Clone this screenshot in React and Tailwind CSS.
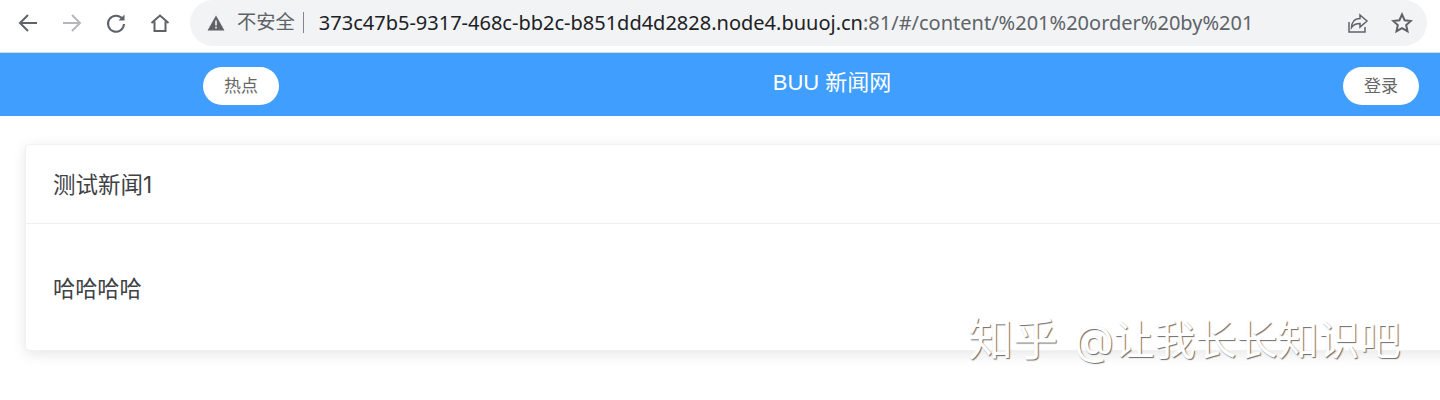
import React from "react";

const cjk = "font-['Inter','Noto_Sans_CJK_SC',sans-serif]";

function Nav() {
  return (
    <div className="flex items-center pl-[17px] shrink-0">
      <svg width="22" height="22" viewBox="0 0 22 22" fill="none" stroke="#5f6368" strokeWidth="2"><path d="M20 11H3M11 3l-8 8 8 8" /></svg>
      <svg className="ml-[22px]" width="22" height="22" viewBox="0 0 22 22" fill="none" stroke="#b5b7ba" strokeWidth="2"><path d="M2 11h17M11 3l8 8-8 8" /></svg>
      <svg className="ml-[22px]" width="22" height="22" viewBox="0 0 22 22" fill="none" stroke="#5f6368" strokeWidth="2"><path d="M17.500 7A8 8 0 1 0 19 12" /><path d="M19.500 2.500v6h-6z" fill="#5f6368" stroke="none" /></svg>
      <svg className="ml-[22px]" width="22" height="22" viewBox="0 0 22 22" fill="none" stroke="#5f6368" strokeWidth="2"><path d="M2.500 11 11 3.500l8.500 7.500M5.500 9.500V19h11V9.500" /></svg>
    </div>
  );
}

export default function App() {
  return (
    <div className="relative h-[400px] w-[1440px] overflow-hidden bg-white font-['Liberation_Sans','Noto_Sans_CJK_SC',sans-serif]">
      <div className="flex h-[53px] items-center border-b border-[#d5d7da] pb-[7px]">
        <Nav />
        <div className="ml-[19px] flex h-[46px] w-[1237px] items-center rounded-full bg-[#f1f3f4] pl-[17px] pr-[14px]">
          <svg width="18" height="18" viewBox="0 0 18 18" className="shrink-0"><path d="M9 1.500 17.500 16.500H.5z" fill="#5f6368" /><path d="M8.200 6.500h1.600v5H8.200zM8.200 12.800h1.600v1.600H8.200z" fill="#f1f3f4" /></svg>
          <span className={`ml-[12px] text-[19.300px] text-[#5f6368] ${cjk}`}>不安全</span>
          <span className="ml-[8px] h-[21px] w-px bg-[#80868b]" />
          <span className="ml-[15px] whitespace-nowrap font-['Noto_Sans',sans-serif] text-[20px] text-[#202124]">
            373c47b5-9317-468c-bb2c-b851dd4d2828.node4.buuoj.cn<span className="text-[#5f6368]">:81/#/content/%201%20order%20by%201</span>
          </span>
          <div className="ml-auto flex items-center gap-[22px]">
            <svg width="22" height="22" viewBox="0 0 22 22" fill="none" stroke="#5f6368" strokeWidth="1.500"><path d="M2 10v10h16v-5" /><path d="M13 3l7 6-7 6v-3.500c-4 0-6.500 1-8.500 4 0-5 3-9 8.500-9z" /></svg>
            <svg width="22" height="22" viewBox="0 0 22 22" fill="none" stroke="#5f6368" strokeWidth="2"><path d="M11 2.500l2.600 5.700 6.200.7-4.600 4.200 1.300 6.100L11 16.100l-5.500 3.100 1.300-6.100-4.600-4.200 6.200-.7z" /></svg>
          </div>
        </div>
      </div>

      <div className="flex h-[63px] items-center bg-[#409eff] pl-[203px] pr-[21px]">
        <button className={`mt-[2px] h-[38px] w-[76px] rounded-full bg-white pt-[2px] text-[17px] text-[#666] ${cjk}`}>热点</button>
        <div className="mb-[5px] flex-1 pl-[42px] text-center text-[22px] text-white">BUU 新闻网</div>
        <button className={`mt-[2px] h-[38px] w-[76px] rounded-full bg-white pt-[2px] text-[17px] text-[#666] ${cjk}`}>登录</button>
      </div>

      <div className="pl-[25px] pt-[28px]">
        <div className="h-[207px] w-[1500px] rounded-[5px] border border-[#f0f1f3] bg-white shadow-[0_3px_14px_0_rgba(0,0,0,0.1)]">
          <div className={`flex h-[79px] items-center border-b border-[#eeeff1] pl-[27px] pt-[2px] text-[22.500px] text-[#404246] ${cjk}`}>测试新闻1</div>
          <div className={`pl-[27px] pt-[49px] text-[22.200px] leading-[32px] text-[#404246] ${cjk}`}>哈哈哈哈</div>
        </div>
      </div>

      <div className={`absolute left-[968px] top-[314px] flex items-center whitespace-nowrap leading-[52px] text-white [text-shadow:1px_1px_1px_rgba(70,70,70,0.8)] ${cjk}`}>
        <span className="text-[45px]">知乎</span>
        <span className="ml-[16px] text-[41px]">@让我长长知识吧</span>
      </div>
    </div>
  );
}
